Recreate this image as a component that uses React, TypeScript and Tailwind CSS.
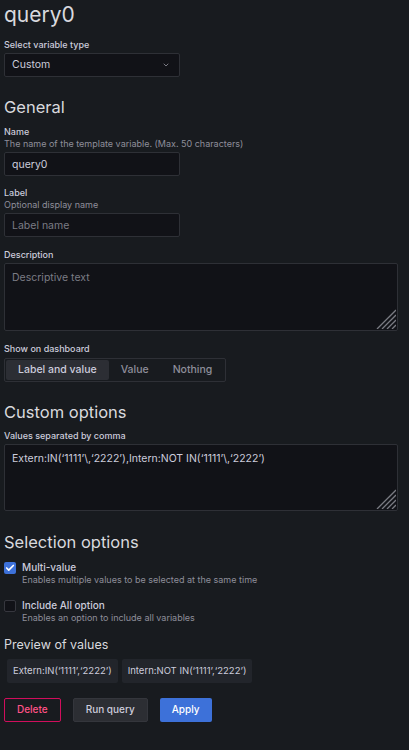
import { ChevronDown, Check } from "lucide-react";

function FieldLabel({ children, desc }: { children: React.ReactNode; desc?: string }) {
  return (
    <div className="mb-[2px]">
      <div className="text-[9px] leading-[13px] font-medium text-[#ccccdc]">{children}</div>
      {desc && <div className="text-[9px] leading-[12px] text-[#8e8e9a]">{desc}</div>}
    </div>
  );
}

function TextInput({ value, placeholder }: { value?: string; placeholder?: string }) {
  return (
    <input
      defaultValue={value}
      placeholder={placeholder}
      className="mt-[1px] block h-[24px] w-[176px] rounded-[2px] border border-[#2e3036] bg-[#111217] px-[7px] text-[10.5px] text-[#ccccdc] outline-none placeholder:text-[#7b7c85]"
    />
  );
}

function CheckRow({ checked, label, desc }: { checked: boolean; label: string; desc: string }) {
  return (
    <div className="flex gap-[6px]">
      <div
        className={
          checked
            ? "mt-[1px] flex h-[12px] w-[12px] items-center justify-center rounded-[2px] bg-[#3d71d9]"
            : "mt-[1px] h-[12px] w-[12px] rounded-[2px] border border-[#36373e] bg-[#111217]"
        }
      >
        {checked && <Check size={10} strokeWidth={4} color="#ffffff" />}
      </div>
      <div>
        <div className="text-[10px] leading-[13px] font-medium text-[#ccccdc]">{label}</div>
        <div className="text-[9px] leading-[12px] text-[#8e8e9a]">{desc}</div>
      </div>
    </div>
  );
}

// textarea with the hatched grip Grafana draws in the corner
function Area({ h, value, placeholder }: { h: string; value?: string; placeholder?: string }) {
  return (
    <div className="relative w-[394px]">
      <textarea
        defaultValue={value}
        placeholder={placeholder}
        className={`block w-[394px] ${h} resize-none rounded-[2px] border border-[#2e3036] bg-[#111217] px-[7px] py-[6px] text-[10.5px] leading-[15px] text-[#ccccdc] outline-none placeholder:text-[#7b7c85]`}
      />
      <svg className="pointer-events-none absolute bottom-[2px] right-[2px]" width="20" height="20" viewBox="0 0 20 20">
        <g stroke="#7a7b83" strokeWidth="1.3">
          <line x1="20" y1="1" x2="1" y2="20" />
          <line x1="20" y1="6" x2="6" y2="20" />
          <line x1="20" y1="11" x2="11" y2="20" />
          <line x1="20" y1="16" x2="16" y2="20" />
        </g>
      </svg>
    </div>
  );
}

export default function App() {
  return (
    <div className="min-h-screen bg-[#181b1f] pl-[4px] font-[Inter,sans-serif] text-[#ccccdc]">
      <h1 className="text-[21px] leading-[30px] font-normal text-[#d8d9de]">query0</h1>

      <div className="mt-[7px] text-[9px] leading-[16px] font-medium">Select variable type</div>
      <div className="flex h-[24px] w-[176px] items-center justify-between rounded-[2px] border border-[#2e3036] bg-[#111217] pl-[7px] pr-[9px] text-[10.5px]">
        <span>Custom</span>
        <ChevronDown size={8} strokeWidth={2.2} color="#a0a1aa" />
      </div>

      <h2 className="mt-[19px] text-[16.5px] leading-[22px] text-[#d8d9de]">General</h2>

      <div className="mt-[7px]">
        <FieldLabel desc="The name of the template variable. (Max. 50 characters)">Name</FieldLabel>
        <TextInput value="query0" />
      </div>

      <div className="mt-[10px]">
        <FieldLabel desc="Optional display name">Label</FieldLabel>
        <TextInput placeholder="Label name" />
      </div>

      <div className="mt-[11px]">
        <FieldLabel>Description</FieldLabel>
        <Area h="h-[68px]" placeholder="Descriptive text" />
      </div>

      <div className="mt-[11px]">
        <div className="text-[9px] leading-[13px] font-medium text-[#ccccdc]">Show on dashboard</div>
        <div className="mt-[1px] inline-flex h-[24px] items-stretch rounded-[2px] border border-[#2e3036] p-[1px] text-[10.5px] font-medium">
          <div className="flex items-center rounded-[2px] bg-[#2c2e34] px-[12px] text-[#ccccdc]">Label and value</div>
          <div className="flex items-center px-[12px] text-[#8e8e9a]">Value</div>
          <div className="flex items-center px-[12px] text-[#8e8e9a]">Nothing</div>
        </div>
      </div>

      <h2 className="mt-[19px] text-[16.5px] leading-[22px] text-[#d8d9de]">Custom options</h2>

      <div className="mt-[6px]">
        <FieldLabel>Values separated by comma</FieldLabel>
        <div className="mt-[1px]">
          <Area h="h-[67px]" value="Extern:IN(‘1111’\,‘2222’),Intern:NOT IN(‘1111’\,‘2222’)" />
        </div>
      </div>

      <h2 className="mt-[20px] text-[16.5px] leading-[22px] text-[#d8d9de]">Selection options</h2>

      <div className="mt-[8px]">
        <CheckRow checked label="Multi-value" desc="Enables multiple values to be selected at the same time" />
      </div>
      <div className="mt-[13px]">
        <CheckRow checked={false} label="Include All option" desc="Enables an option to include all variables" />
      </div>

      <div className="mt-[12px] text-[12.5px] leading-[18px] text-[#d8d9de]">Preview of values</div>
      <div className="mt-[5px] ml-[3px] flex gap-[4px]">
        {["Extern:IN(‘1111’,‘2222’)", "Intern:NOT IN(‘1111’,‘2222’)"].map((v) => (
          <div
            key={v}
            className="flex h-[24px] items-center rounded-[2px] bg-[#22252b] px-[6px] text-[9.5px] text-[#ccccdc]"
          >
            {v}
          </div>
        ))}
      </div>

      <div className="mt-[15px] flex gap-[12px] pb-[28px]">
        <button className="h-[24px] rounded-[2px] border border-[#d10e5c] bg-transparent px-[12px] text-[10px] font-medium text-[#ff5286]">
          Delete
        </button>
        <button className="h-[24px] rounded-[2px] border border-[#34363c] bg-[#2c2e33] px-[12px] text-[10px] font-medium text-[#ccccdc]">
          Run query
        </button>
        <button className="h-[24px] rounded-[2px] bg-[#3d71d9] px-[12px] text-[10px] font-medium text-white">
          Apply
        </button>
      </div>
    </div>
  );
}
